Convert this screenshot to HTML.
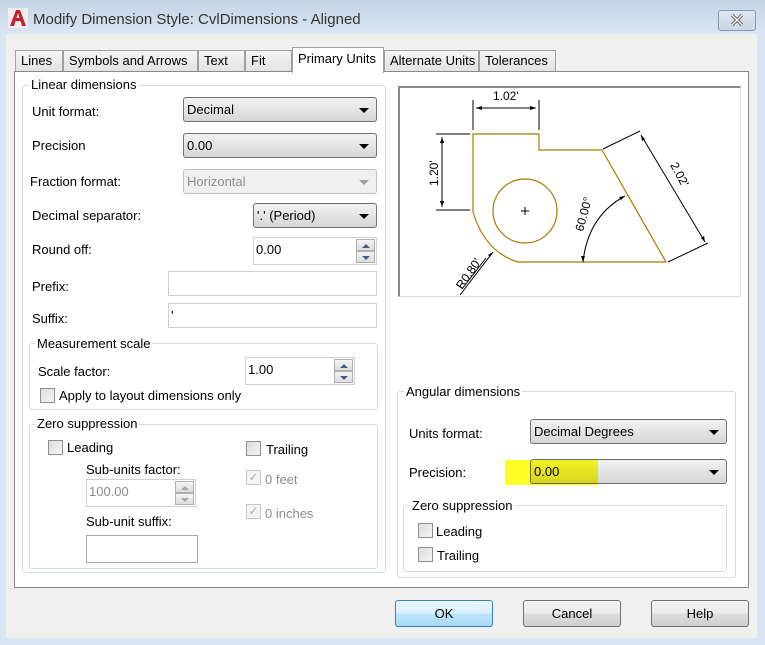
<!DOCTYPE html>
<html><head><meta charset="utf-8"><style>
*{box-sizing:border-box;margin:0;padding:0}
body{width:765px;height:645px;overflow:hidden;background:#d9e5f2;font-family:"Liberation Sans",sans-serif;font-size:13px;color:#000;position:relative}
.a{position:absolute}
.title{left:0;top:0;width:765px;height:34px;background:linear-gradient(#c4d3e3,#d9e5f2)}
.client{left:6px;top:34px;width:751px;height:604px;background:#f0f0f0}
.tab{position:absolute;top:50px;height:22px;border:1px solid #a0a0a0;border-bottom:none;background:linear-gradient(#f4f4f4,#e2e2e2);padding:2px 0 0 5px;font-size:13px}
.tab.sel{top:47px;height:26px;background:#fff;z-index:3;padding-top:3px}
.page{left:14px;top:71px;width:735px;height:517px;background:#fff;border:1px solid #8a8a8a}
.grp{position:absolute;border:1px solid #d5dde4;border-radius:3px}
.gl{position:absolute;background:#fff;padding:0 2px;font-size:13px}
.cb{position:absolute;height:25px;border:1px solid #707070;border-radius:3px;background:linear-gradient(#f2f2f2,#e4e4e4 50%,#d6d6d6);padding:4px 0 0 3px}
.cb.dis{border-color:#c0c0c0;color:#8d8d8d;background:#f0f0f0}
.cb:after{content:"";position:absolute;right:7px;top:10px;border-left:5px solid transparent;border-right:5px solid transparent;border-top:5px solid #000}
.cb.dis:after{border-top-color:#a0a0a0}
.tb{position:absolute;border:1px solid #d0d0d0;background:#fff;padding:4px 0 0 2px}
.spin{position:absolute;right:1px;top:1px;width:19px;bottom:1px}
.spin div{height:50%;border:1px solid #b0b0b0;background:linear-gradient(#f4f4f4,#dcdcdc);position:relative}
.spin div:after{content:"";position:absolute;left:5px;top:4px;border-left:4px solid transparent;border-right:4px solid transparent}
.spin .u:after{border-bottom:4px solid #4a5a8a}
.spin .d:after{border-top:4px solid #4a5a8a}
.spin.dis .u:after{border-bottom-color:#a8a8a8}
.spin.dis .d:after{border-top-color:#a8a8a8}
.ck{position:absolute;width:15px;height:15px;border:1px solid #8e8f8f;background:linear-gradient(135deg,#dcdcdc,#f6f6f6)}
.ck.dis{border-color:#c8c8c8;background:#f4f4f4;color:#b0b0b0;font-size:12px;line-height:13px;text-align:center}
.lbl{position:absolute;font-size:13px}
.btn{position:absolute;top:600px;width:98px;height:27px;border:1px solid #707070;border-radius:3px;background:linear-gradient(#f2f2f2,#ebebeb 50%,#dddddd 51%,#cfcfcf);text-align:center;padding-top:5px}
</style></head><body>
<div class="a title"></div>
<svg class="a" style="left:8px;top:8px" width="20" height="20" viewBox="0 0 20 20"><rect width="20" height="20" fill="#f3ecec"/><path d="M2 18 L8 2 L12 2 L18 18 L14 18 L12.5 13 L7.5 13 L6 18Z M8.5 10 L11.5 10 L10 5Z" fill="#c1232e" fill-rule="evenodd"/></svg>
<div class="a" style="left:33px;top:11px;font-size:15px;color:#333">Modify Dimension Style: CvlDimensions - Aligned</div>
<div class="a" style="left:718px;top:10px;width:38px;height:21px;border:1px solid #8a9bb0;border-radius:3px;background:linear-gradient(#dfe7f0,#c9d6e4)"></div>
<svg class="a" style="left:730px;top:14px" width="14" height="12" viewBox="0 0 14 12"><path d="M2 1 L12 11 M12 1 L2 11" stroke="#555" stroke-width="3.2"/><path d="M2 1 L12 11 M12 1 L2 11" stroke="#fff" stroke-width="1.4"/></svg>
<div class="a client"></div>

<div class="tab" style="left:15px;width:48px">Lines</div>
<div class="tab" style="left:63px;width:135px">Symbols and Arrows</div>
<div class="tab" style="left:198px;width:47px">Text</div>
<div class="tab" style="left:245px;width:47px">Fit</div>
<div class="tab sel" style="left:292px;width:92px">Primary Units</div>
<div class="tab" style="left:384px;width:95px">Alternate Units</div>
<div class="tab" style="left:479px;width:77px">Tolerances</div>
<div class="a page"></div>

<div class="grp" style="left:22px;top:85px;width:364px;height:488px"></div>
<div class="gl" style="left:29px;top:77px">Linear dimensions</div>
<div class="lbl" style="left:32px;top:104px">Unit format:</div>
<div class="cb" style="left:183px;top:97px;width:194px">Decimal</div>
<div class="lbl" style="left:32px;top:138px">Precision</div>
<div class="cb" style="left:183px;top:133px;width:194px">0.00</div>
<div class="lbl" style="left:30px;top:174px">Fraction format:</div>
<div class="cb dis" style="left:183px;top:169px;width:194px">Horizontal</div>
<div class="lbl" style="left:32px;top:208px">Decimal separator:</div>
<div class="cb" style="left:253px;top:203px;width:124px">'.' (Period)</div>
<div class="lbl" style="left:32px;top:242px">Round off:</div>
<div class="tb" style="left:253px;top:237px;width:124px;height:28px">0.00<div class="spin"><div class="u"></div><div class="d"></div></div></div>
<div class="lbl" style="left:32px;top:279px">Prefix:</div>
<div class="tb" style="left:168px;top:271px;width:209px;height:25px"></div>
<div class="lbl" style="left:32px;top:311px">Suffix:</div>
<div class="tb" style="left:168px;top:303px;width:209px;height:25px">'</div>

<div class="grp" style="left:29px;top:343px;width:349px;height:67px"></div>
<div class="gl" style="left:35px;top:336px">Measurement scale</div>
<div class="lbl" style="left:38px;top:364px">Scale factor:</div>
<div class="tb" style="left:245px;top:357px;width:110px;height:28px">1.00<div class="spin"><div class="u"></div><div class="d"></div></div></div>
<div class="ck" style="left:40px;top:388px"></div>
<div class="lbl" style="left:59px;top:388px">Apply to layout dimensions only</div>

<div class="grp" style="left:29px;top:424px;width:349px;height:145px"></div>
<div class="gl" style="left:35px;top:416px">Zero suppression</div>
<div class="ck" style="left:48px;top:440px"></div>
<div class="lbl" style="left:67px;top:440px">Leading</div>
<div class="ck" style="left:246px;top:441px"></div>
<div class="lbl" style="left:266px;top:442px">Trailing</div>
<div class="lbl" style="left:86px;top:462px">Sub-units factor:</div>
<div class="tb" style="left:86px;top:479px;width:110px;height:28px;color:#8d8d8d">100.00<div class="spin dis"><div class="u"></div><div class="d"></div></div></div>
<div class="ck dis" style="left:246px;top:470px">✓</div>
<div class="lbl" style="left:265px;top:472px;color:#8d8d8d">0 feet</div>
<div class="ck dis" style="left:246px;top:504px">✓</div>
<div class="lbl" style="left:265px;top:506px;color:#8d8d8d">0 inches</div>
<div class="lbl" style="left:86px;top:514px">Sub-unit suffix:</div>
<div class="tb" style="left:86px;top:535px;width:112px;height:28px;border-color:#a8a8a8"></div>

<div class="a" style="left:398px;top:86px;width:343px;height:211px;border:1px solid #ddd;border-left:2px solid #888;border-top:2px solid #888;background:#fff"></div>
<svg class="a" style="left:398px;top:86px" width="343" height="211" viewBox="398 86 343 211">
<g fill="none" stroke="#a67c00" stroke-width="1.2">
<path d="M473 134 L539 134 L539 150 L602 150 L666 262 L518 262 Q485 252 473 212 Z" stroke-linejoin="round"/>
<circle cx="525" cy="211" r="32"/>
</g>
<g stroke="#000" stroke-width="1" fill="none">
<path d="M473 100 V130 M539 100 V130 M476 108 H536"/>
<path d="M436 134 H470 M436 210 H470 M442 137 V207"/>
<path d="M603 149 L640 131 M668 262 L708 243 M641 135 L705 242"/>
<path d="M486 258 L462 289 M493 252 L460 295"/>
<path d="M583 262 Q588 216 625 196"/>
<path d="M521 211 H529 M525 207 V215"/>
</g>
<g fill="#000">
<path d="M476 108 l6 -2 v4z M536 108 l-6 -2 v4z M442 137 l-2 6 h4z M442 207 l-2 -6 h4z M641 135 l1 6 l3 -2z M705 242 l-1 -6 l-3 2z M493 252 l-5 3 l2 2z M625 196 l-6 1 l2 3z M583 262 l-2 -6 h4z"/>
</g>
<g font-family="Liberation Sans,sans-serif" font-size="12" fill="#000">
<text x="493" y="100">1.02'</text>
<text transform="translate(438 186) rotate(-90)">1.20'</text>
<text transform="translate(670 165) rotate(62)">2.02'</text>
<text transform="translate(583 232) rotate(-75)">60.00°</text>
<text transform="translate(462 290) rotate(-55)">R0.80'</text>
</g>
</svg>

<div class="grp" style="left:397px;top:391px;width:339px;height:187px"></div>
<div class="gl" style="left:404px;top:384px">Angular dimensions</div>
<div class="lbl" style="left:409px;top:426px">Units format:</div>
<div class="cb" style="left:530px;top:419px;width:197px">Decimal Degrees</div>
<div class="lbl" style="left:409px;top:465px">Precision:</div>
<div class="cb" style="left:530px;top:459px;width:197px">0.00</div>
<div class="a" style="left:505px;top:460px;width:93px;height:25px;background:#ffff00;mix-blend-mode:multiply;opacity:0.85"></div>
<div class="grp" style="left:403px;top:505px;width:324px;height:67px"></div>
<div class="gl" style="left:410px;top:498px">Zero suppression</div>
<div class="ck" style="left:418px;top:523px"></div>
<div class="lbl" style="left:436px;top:524px">Leading</div>
<div class="ck" style="left:418px;top:547px"></div>
<div class="lbl" style="left:437px;top:548px">Trailing</div>

<div class="btn" style="left:395px;border-color:#3c7fb1;background:linear-gradient(#eaf6fd,#d9f0fc 50%,#bee6fd 51%,#a7d9f5)">OK</div>
<div class="btn" style="left:523px">Cancel</div>
<div class="btn" style="left:651px">Help</div>
</body></html>
